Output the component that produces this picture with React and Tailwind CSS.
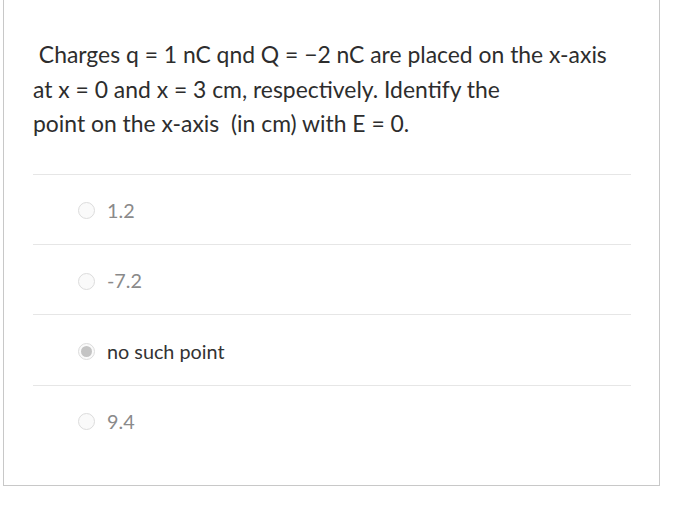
import React from 'react';

const options = [
  { label: '1.2', selected: false },
  { label: '-7.2', selected: false },
  { label: 'no such point', selected: true },
  { label: '9.4', selected: false },
];

const Radio = ({ selected }) => (
  <span className="flex h-[17px] w-[17px] items-center justify-center rounded-full border border-[#dcdcdc] bg-[#fafafa]">
    {selected && <span className="h-[11px] w-[11px] rounded-full bg-[#c4c4c4]" />}
  </span>
);

const App = () => {
  return (
    <div className="h-[511px] w-[700px] overflow-hidden bg-white" style={{ fontFamily: 'Lato, "Open Sans", sans-serif' }}>
      <div className="-mt-[2px] ml-[3px] h-[488px] w-[657px] border border-[#c8c8c8] bg-white">
        <div className="pl-[29px] pr-[10px] pt-[38px] text-[22.9px] leading-[34.5px] text-[#2d2d2d]">
          <p>&nbsp;Charges q = 1 nC qnd Q = −2 nC are placed on the x-axis</p>
          <p>at x = 0 and x = 3 cm, respectively. Identify the</p>
          <p>point on the x-axis&nbsp; (in cm) with E = 0.</p>
        </div>
        <div className="ml-[29px] mr-[28px] mt-[33px]">
          {options.map((opt) => (
            <div key={opt.label} className="flex h-[70.4px] items-center border-t border-[#e6e6e6] pl-[45px] pt-[3px]">
              <Radio selected={opt.selected} />
              <span
                className={`ml-[12px] text-[19.8px] ${opt.selected ? 'text-[#333333]' : 'text-[#8a8a8a]'}`}
              >
                {opt.label}
              </span>
            </div>
          ))}
        </div>
      </div>
    </div>
  );
};

export default App;
